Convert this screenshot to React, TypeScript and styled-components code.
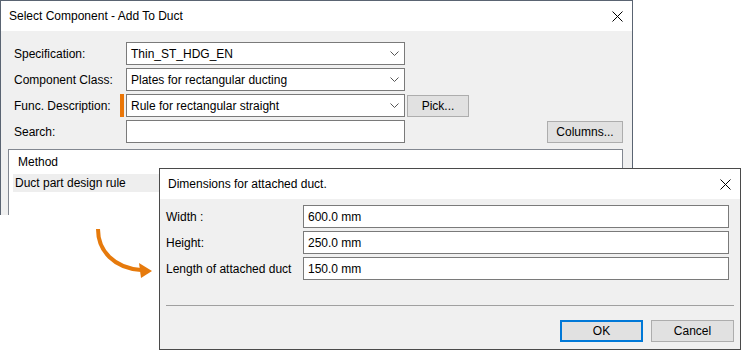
import React from 'react';
import { createGlobalStyle, styled } from 'styled-components';

const GlobalStyle = createGlobalStyle`
  html, body {
    margin: 0;
    padding: 0;
    background: #ffffff;
  }
  body {
    font-family: "Liberation Sans", Arial, sans-serif;
    font-size: 12px;
    color: #000;
  }
`;

const Canvas = styled.div`
  position: relative;
  width: 741px;
  height: 350px;
  overflow: hidden;
  background: #fff;
`;

// dialogs are windows on a desktop, placed by their screen position
const Window = styled.div<{ $left: number; $top: number; $width: number; $height: number; $border: string; $cut?: boolean }>`
  position: absolute;
  left: ${p => p.$left}px;
  top: ${p => p.$top}px;
  width: ${p => p.$width}px;
  height: ${p => p.$height}px;
  box-sizing: border-box;
  border: 1px solid ${p => p.$border};
  border-bottom: ${p => (p.$cut ? 'none' : `1px solid ${p.$border}`)};
  background: #f0f0f0;
  display: flex;
  flex-direction: column;
  overflow: hidden;
`;

const TitleBar = styled.div`
  height: 30px;
  flex: none;
  background: #fff;
  display: flex;
  align-items: center;
  justify-content: space-between;
  padding: 0 0 0 8px;
`;

const TitleText = styled.span`
  font-size: 12px;
  line-height: 16px;
`;

const CloseBox = styled.div`
  width: 30px;
  height: 30px;
  display: flex;
  align-items: center;
  justify-content: center;
`;

const Body = styled.div<{ $pad: string }>`
  flex: 1;
  padding: ${p => p.$pad};
  display: flex;
  flex-direction: column;
`;

const FormRow = styled.div<{ $gap?: number }>`
  display: flex;
  align-items: center;
  height: 23px;
  margin-bottom: ${p => p.$gap ?? 3}px;
`;

const Label = styled.div<{ $width: number; $indent?: number }>`
  width: ${p => p.$width}px;
  flex: none;
  position: relative;
  height: 23px;
  box-sizing: border-box;
  padding-left: ${p => p.$indent ?? 0}px;
  display: flex;
  align-items: center;
`;

const Marker = styled.div`
  position: absolute;
  right: 2px;
  top: 0;
  width: 4px;
  height: 23px;
  background: #ea7608;
`;

const Field = styled.div<{ $width: number }>`
  width: ${p => p.$width}px;
  height: 23px;
  box-sizing: border-box;
  flex: none;
  background: #fff;
  border: 1px solid #7a7a7a;
  display: flex;
  align-items: center;
  justify-content: space-between;
  padding: 0 3px 0 4px;
`;

const Chevron = () => (
  <svg width="9" height="5" viewBox="0 0 9 5" style={{ marginRight: 2 }}>
    <path d="M0.5 0.5 L4.5 4.5 L8.5 0.5" fill="none" stroke="#555" strokeWidth="1" />
  </svg>
);

const Button = styled.div<{ $width: number; $primary?: boolean }>`
  width: ${p => p.$width}px;
  height: 22px;
  box-sizing: border-box;
  flex: none;
  background: #e1e1e1;
  border: ${p => (p.$primary ? '2px solid #0078d7' : '1px solid #adadad')};
  display: flex;
  align-items: center;
  justify-content: center;
`;

const Spacer = styled.div`
  flex: 1;
`;

const ListPanel = styled.div`
  margin-top: 6px;
  flex: 1;
  background: #fff;
  border: 1px solid #828790;
  border-bottom: none;
  padding: 0 0 0 4px;
`;

const ListHeader = styled.div`
  height: 23px;
  display: flex;
  align-items: center;
  padding-left: 5px;
`;

const ListRow = styled.div`
  height: 18px;
  margin-top: 1px;
  background: #eeeeee;
  display: flex;
  align-items: center;
  padding-left: 2px;
`;

const Separator = styled.div`
  height: 1px;
  background: #a0a0a0;
  margin: 22px 0 14px;
`;

const ButtonRow = styled.div`
  display: flex;
  justify-content: flex-end;
  gap: 8px;
`;

const ArrowBox = styled.svg`
  position: absolute;
  left: 90px;
  top: 222px;
`;

const CloseIcon = () => (
  <svg width="11" height="11" viewBox="0 0 11 11">
    <path d="M0.5 0.5 L10.5 10.5 M10.5 0.5 L0.5 10.5" stroke="#000" strokeWidth="1" />
  </svg>
);

const combos = [
  { label: 'Specification:', value: 'Thin_ST_HDG_EN' },
  { label: 'Component Class:', value: 'Plates for rectangular ducting' },
];

const dims = [
  { label: 'Width :', value: '600.0 mm' },
  { label: 'Height:', value: '250.0 mm' },
  { label: 'Length of attached duct', value: '150.0 mm' },
];

export default function App() {
  return (
    <>
      <GlobalStyle />
      <Canvas>
        <Window $left={0} $top={0} $width={633} $height={215} $border="#5a6472" $cut>
          <TitleBar>
            <TitleText>Select Component - Add To Duct</TitleText>
            <CloseBox><CloseIcon /></CloseBox>
          </TitleBar>
          <Body $pad="11px 9px 0 7px">
            {combos.map(c => (
              <FormRow key={c.label}>
                <Label $width={118} $indent={6}>{c.label}</Label>
                <Field $width={279}>
                  <span>{c.value}</span>
                  <Chevron />
                </Field>
              </FormRow>
            ))}
            <FormRow>
              <Label $width={118} $indent={6}>
                Func. Description:
                <Marker />
              </Label>
              <Field $width={279}>
                <span>Rule for rectangular straight</span>
                <Chevron />
              </Field>
              <Button $width={62} style={{ marginLeft: 2 }}>Pick...</Button>
            </FormRow>
            <FormRow $gap={0}>
              <Label $width={118} $indent={6}>Search:</Label>
              <Field $width={279} />
              <Spacer />
              <Button $width={76}>Columns...</Button>
            </FormRow>
            <ListPanel>
              <ListHeader>Method</ListHeader>
              <ListRow>Duct part design rule</ListRow>
            </ListPanel>
          </Body>
        </Window>

        <ArrowBox width="70" height="63" viewBox="0 0 70 63">
          <path d="M8 7 C8 29 24 46 51 48" fill="none" stroke="#e67a0c" strokeWidth="4" />
          <polygon points="49,41 62,49 51,56" fill="#e67a0c" />
        </ArrowBox>

        <Window $left={159} $top={168} $width={582} $height={182} $border="#4a4a4a">
          <TitleBar>
            <TitleText>Dimensions for attached duct.</TitleText>
            <CloseBox><CloseIcon /></CloseBox>
          </TitleBar>
          <Body $pad="6px 6px 0 6px">
            {dims.map(d => (
              <FormRow key={d.label}>
                <Label $width={137}>{d.label}</Label>
                <Field $width={426}>
                  <span>{d.value}</span>
                </Field>
              </FormRow>
            ))}
            <Separator />
            <ButtonRow>
              <Button $width={83} $primary>OK</Button>
              <Button $width={83}>Cancel</Button>
            </ButtonRow>
          </Body>
        </Window>
      </Canvas>
    </>
  );
}
